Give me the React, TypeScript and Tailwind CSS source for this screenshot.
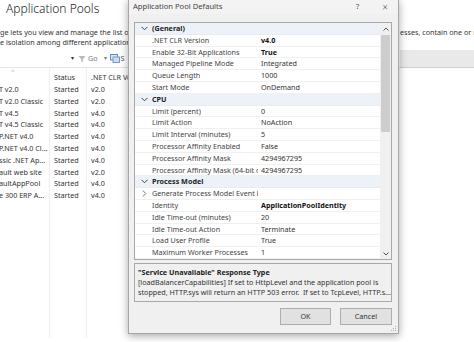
import React from "react";

const names = ["T v2.0", "T v2.0 Classic", "T v4.5", "T v4.5 Classic", "P.NET v4.0", "P.NET v4.0 Cl...", "ssic .NET Ap...", "ault web site", "aultAppPool", "e 300 ERP A..."];
const vers = ["v2.0", "v2.0", "v4.0", "v4.0", "v4.0", "v4.0", "v4.0", "v2.0", "v4.0", "v4.0"];

type Row = { kind: "cat"; label: string } | { kind: "prop"; label: string; value: string; bold?: boolean; expand?: boolean };

const rows: Row[] = [
  { kind: "cat", label: "(General)" },
  { kind: "prop", label: ".NET CLR Version", value: "v4.0", bold: true },
  { kind: "prop", label: "Enable 32-Bit Applications", value: "True", bold: true },
  { kind: "prop", label: "Managed Pipeline Mode", value: "Integrated" },
  { kind: "prop", label: "Queue Length", value: "1000" },
  { kind: "prop", label: "Start Mode", value: "OnDemand" },
  { kind: "cat", label: "CPU" },
  { kind: "prop", label: "Limit (percent)", value: "0" },
  { kind: "prop", label: "Limit Action", value: "NoAction" },
  { kind: "prop", label: "Limit Interval (minutes)", value: "5" },
  { kind: "prop", label: "Processor Affinity Enabled", value: "False" },
  { kind: "prop", label: "Processor Affinity Mask", value: "4294967295" },
  { kind: "prop", label: "Processor Affinity Mask (64-bit option)", value: "4294967295" },
  { kind: "cat", label: "Process Model" },
  { kind: "prop", label: "Generate Process Model Event Log Entry", value: "", expand: true },
  { kind: "prop", label: "Identity", value: "ApplicationPoolIdentity", bold: true },
  { kind: "prop", label: "Idle Time-out (minutes)", value: "20" },
  { kind: "prop", label: "Idle Time-out Action", value: "Terminate" },
  { kind: "prop", label: "Load User Profile", value: "True" },
  { kind: "prop", label: "Maximum Worker Processes", value: "1" },
];

function ChevDown() {
  return (
    <svg width="7" height="5" viewBox="0 0 7 5" fill="none" stroke="#444" strokeWidth="1">
      <path d="M0.5 0.8 L3.5 3.8 L6.5 0.8" />
    </svg>
  );
}
function ChevRight() {
  return (
    <svg width="5" height="7" viewBox="0 0 5 7" fill="none" stroke="#777" strokeWidth="1">
      <path d="M0.8 0.5 L3.8 3.5 L0.8 6.5" />
    </svg>
  );
}

export default function App() {
  return (
    <div className="relative w-[474px] h-[342px] overflow-hidden bg-white font-['Noto_Sans',sans-serif] text-[#333]">
      {/* background page */}
      <div className="flex flex-col h-full">
        <div className="h-[28px] pl-[6px] pt-[1px] text-[12px] leading-[16px] font-light text-[#222] whitespace-nowrap">Application Pools</div>
        <div className="flex text-[7.2px] leading-[9.5px] text-[#333] whitespace-nowrap">
          <div className="w-[400px] overflow-hidden">
            <div>ge lets you view and manage the list of application pools on the server.</div>
            <div>e isolation among different applications.</div>
          </div>
          <div className="flex-1 overflow-hidden">esses, contain one or more</div>
        </div>
        <div className="mt-[3px] flex h-[18px]">
          <div className="w-[400px] flex items-center text-[7.2px] text-[#555] border-b border-[#e2e2e2]">
            <span className="ml-[71px] text-[6px] text-[#333]">▾</span>
            <svg className="ml-[4px]" width="8" height="8" viewBox="0 0 8 8">
              <path d="M0.5 1 H7.5 L4.8 4.3 V7.3 L3.2 6.5 V4.3 Z" fill="#b9b9b9" />
            </svg>
            <span className="ml-[2px] text-[#777]">Go</span>
            <span className="ml-[6px] text-[6px] text-[#777]">▾</span>
            <svg className="ml-[3px]" width="10" height="9" viewBox="0 0 10 9">
              <rect x="0.5" y="0.5" width="7" height="5.5" fill="#dbe7f3" stroke="#5b8fc7" />
              <rect x="3" y="3" width="6.5" height="5.5" fill="#c9dcef" stroke="#7a9cc0" />
            </svg>
            <span className="ml-[1px]">S</span>
          </div>
          <div className="flex-1 bg-[#e9e9e9] border-b border-[#cfcfcf]"></div>
        </div>
        <div className="flex flex-1 text-[7.2px] text-[#333] pb-[4px]">
          <div className="w-[50px] border-r border-[#efefef] flex flex-col">
            <div className="relative h-[16px]">
              <span className="absolute left-[11px] top-[-1px] text-[6px] text-[#999]">^</span>
            </div>
            {names.map((n) => (
              <div key={n} className="h-[11.8px] leading-[11.8px] whitespace-nowrap overflow-hidden ml-[-1px]">{n}</div>
            ))}
          </div>
          <div className="w-[37px] border-r border-[#efefef] flex flex-col">
            <div className="h-[16px] leading-[18px] pl-[4px]">Status</div>
            {names.map((n) => (
              <div key={n} className="h-[11.8px] leading-[11.8px] pl-[4px]">Started</div>
            ))}
          </div>
          <div className="flex-1 flex flex-col">
            <div className="h-[16px] leading-[18px] pl-[4px] whitespace-nowrap">.NET CLR Version</div>
            {vers.map((v, i) => (
              <div key={i} className="h-[11.8px] leading-[11.8px] pl-[4px]">{v}</div>
            ))}
          </div>
        </div>
      </div>

      {/* dialog */}
      <div className="absolute left-[128px] top-[-1px] w-[271px] h-[335px] bg-[#f0f0f0] border border-[#a6a6a6] shadow-[0_2px_8px_rgba(0,0,0,0.35)] flex flex-col text-[7.2px]">
        <div className="h-[14px] flex items-center bg-[#f3f3f3] pl-[4px] pr-[10px] text-[7.6px] text-[#444]">
          <span>Application Pool Defaults</span>
          <span className="ml-auto text-[#555]">?</span>
          <span className="ml-[23px] text-[10px] font-light text-[#444]">×</span>
        </div>
        <div className="pt-[8px] px-[5px] flex flex-col">
          <div className="w-[258px] h-[238px] border border-[#a9a9a9] bg-white flex">
            <div className="flex-1 flex flex-col overflow-hidden">
              {rows.map((r, i) =>
                r.kind === "cat" ? (
                  <div key={i} className="h-[11.8px] flex items-center bg-[#edf2f8] border-b border-[#e8ecf1]">
                    <div className="w-[17px] flex justify-center pl-[2px]"><ChevDown /></div>
                    <span className="font-bold text-[#222]">{r.label}</span>
                  </div>
                ) : (
                  <div key={i} className="h-[11.8px] flex items-center border-b border-[#f0f0f0]">
                    <div className="w-[17px] flex justify-center pl-[2px]">{r.expand ? <ChevRight /> : null}</div>
                    <div className="w-[106px] whitespace-nowrap overflow-hidden text-[#444]">{r.label}</div>
                    <div className={"pl-[3px] whitespace-nowrap " + (r.bold ? "font-bold text-[#111]" : "text-[#333]")}>{r.value}</div>
                  </div>
                )
              )}
            </div>
            <div className="w-[11px] bg-[#f0f0f0] flex flex-col items-center">
              <svg className="mt-[4px]" width="6" height="4" viewBox="0 0 6 4" fill="none" stroke="#555" strokeWidth="1">
                <path d="M0.5 3.5 L3 1 L5.5 3.5" />
              </svg>
              <div className="mt-[4px] w-[9px] h-[97px] bg-[#cdcdcd]"></div>
              <svg className="mt-auto mb-[3px]" width="6" height="4" viewBox="0 0 6 4" fill="none" stroke="#555" strokeWidth="1">
                <path d="M0.5 0.5 L3 3 L5.5 0.5" />
              </svg>
            </div>
          </div>
          <div className="mt-[3px] w-[258px] h-[39px] border border-[#a9a9a9] bg-[#f0f0f0] px-[3px] pt-[3px] leading-[10px] whitespace-nowrap overflow-hidden">
            <div className="font-bold text-[#222]">"Service Unavailable" Response Type</div>
            <div className="text-[#333]">[loadBalancerCapabilities] If set to HttpLevel and the application pool is</div>
            <div className="text-[#333]">stopped, HTTP.sys will return an HTTP 503 error.&nbsp; If set to TcpLevel, HTTP.s...</div>
          </div>
          <div className="mt-[6px] flex justify-end gap-[9px] pr-[1px]">
            <div className="w-[51px] h-[17px] bg-[#e1e1e1] border border-[#adadad] flex items-center justify-center text-[#333]">OK</div>
            <div className="w-[52px] h-[17px] bg-[#e1e1e1] border border-[#adadad] flex items-center justify-center text-[#333]">Cancel</div>
          </div>
        </div>
        <svg className="absolute right-[1px] bottom-[1px]" width="6" height="6" viewBox="0 0 6 6" fill="#b0b0b0">
          <rect x="4" y="0" width="1" height="1" />
          <rect x="2" y="2" width="1" height="1" />
          <rect x="4" y="2" width="1" height="1" />
          <rect x="0" y="4" width="1" height="1" />
          <rect x="2" y="4" width="1" height="1" />
          <rect x="4" y="4" width="1" height="1" />
        </svg>
      </div>
    </div>
  );
}
